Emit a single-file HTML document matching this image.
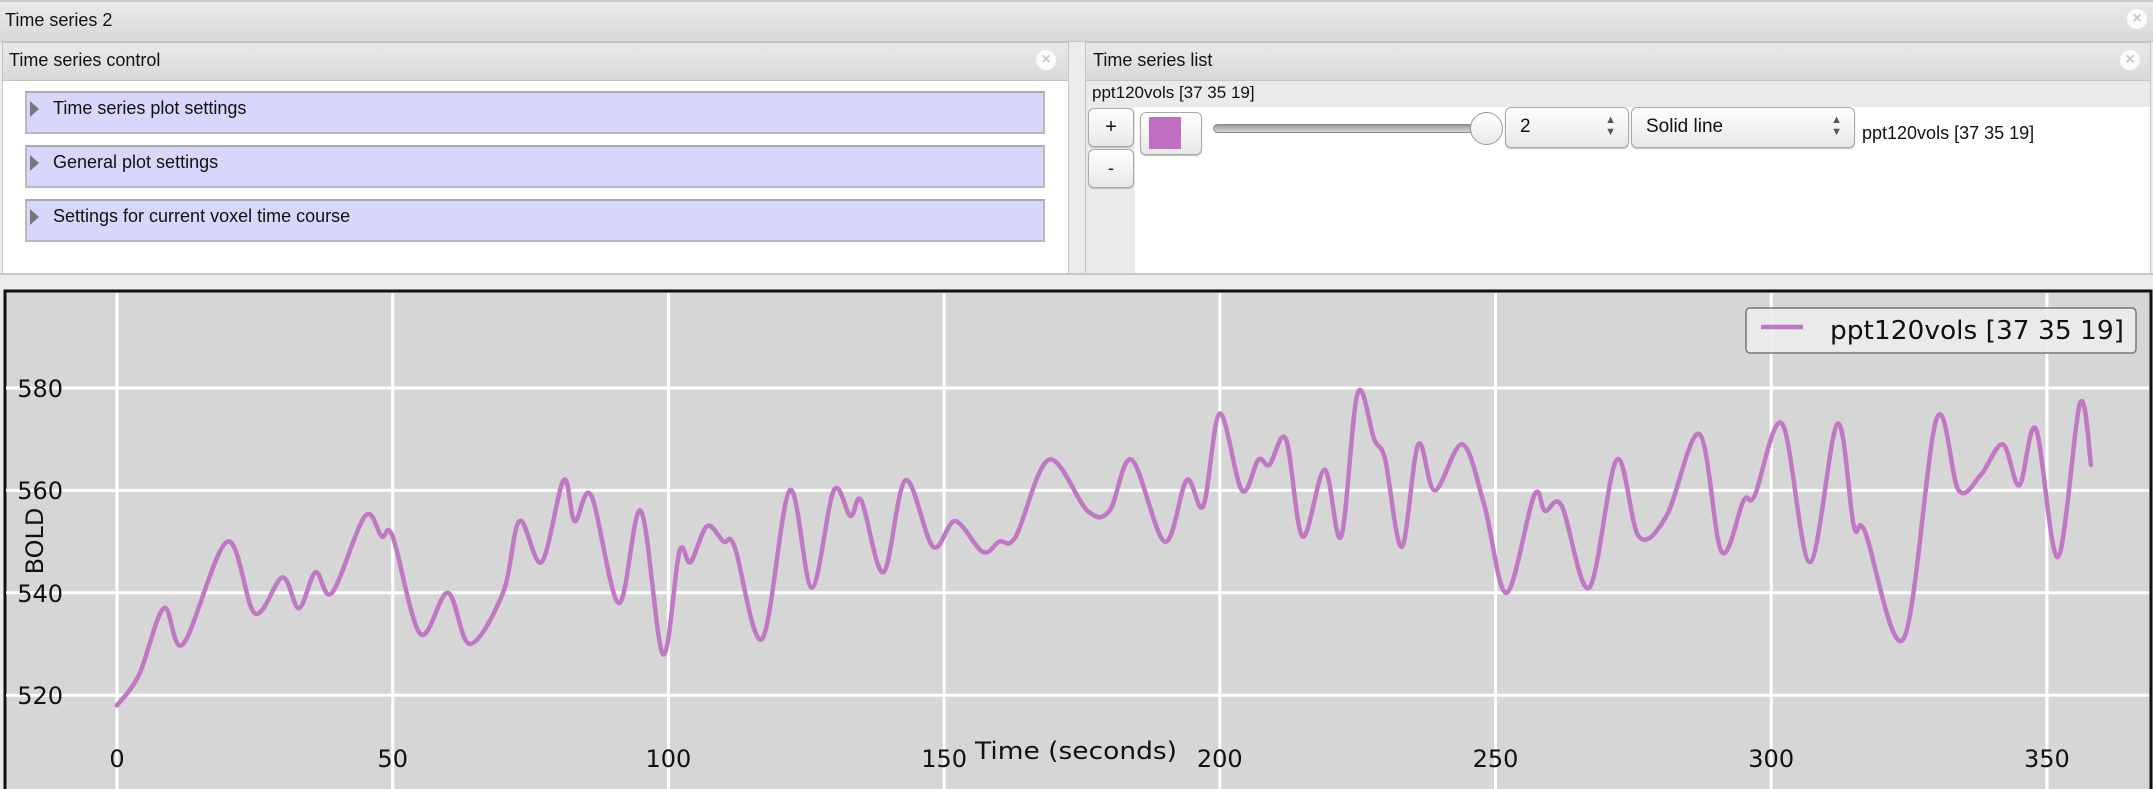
<!DOCTYPE html>
<html><head><meta charset="utf-8">
<style>
*{margin:0;padding:0;box-sizing:border-box}
body{width:2153px;height:789px;overflow:hidden;background:#ececec;font-family:"Liberation Sans",sans-serif;position:relative;color:#111}
.abs{position:absolute}
.bar{background:linear-gradient(#e9e9e9,#d9d9d9);border-bottom:1px solid #c4c4c4}
.t{font-size:18px;position:absolute}
.close{position:absolute;width:20px;height:20px;border-radius:50%;background:#fbfbfb;color:#c8c8c8;font-size:16px;line-height:20px;text-align:center;font-weight:bold}
.acc{position:absolute;left:25px;width:1020px;height:43px;background:#d7d7fb;border:2px solid #b9b9b9;border-top-color:#a9a9a9}
.acc span{position:absolute;left:26px;top:5px;font-size:18px}
.acc i{position:absolute;left:3px;top:8px;width:0;height:0;border-left:9px solid #777;border-top:8px solid transparent;border-bottom:8px solid transparent}
.btn{position:absolute;background:linear-gradient(#fefefe,#e8e8e8);border:1px solid #a8a8a8;border-radius:6px;box-shadow:0 1px 1px #bbb}
</style></head><body>
<div class="abs bar" style="left:0;top:0;width:2153px;height:42px;border-top:2px solid #c9c9c9"></div>
<div class="t" style="left:5px;top:10px">Time series 2</div>
<div class="close" style="left:2127px;top:9px">×</div>

<div class="abs" style="left:2px;top:42px;width:1067px;height:232px;background:#fff;border:1px solid #c4c4c4"></div>
<div class="abs bar" style="left:3px;top:43px;width:1065px;height:38px"></div>
<div class="t" style="left:9px;top:50px">Time series control</div>
<div class="close" style="left:1036px;top:50px">×</div>
<div class="acc" style="top:91px"><i></i><span>Time series plot settings</span></div>
<div class="acc" style="top:145px"><i></i><span>General plot settings</span></div>
<div class="acc" style="top:199px"><i></i><span>Settings for current voxel time course</span></div>

<div class="abs" style="left:1085px;top:42px;width:1066px;height:232px;background:#fff;border:1px solid #c4c4c4"></div>
<div class="abs bar" style="left:1086px;top:43px;width:1064px;height:38px"></div>
<div class="t" style="left:1093px;top:50px">Time series list</div>
<div class="close" style="left:2120px;top:50px">×</div>
<div class="abs" style="left:1086px;top:81px;width:1064px;height:26px;background:#ebebeb"></div>
<div class="t" style="left:1092px;top:83px;font-size:17px">ppt120vols [37 35 19]</div>
<div class="abs" style="left:1086px;top:107px;width:49px;height:166px;background:#ebebeb"></div>
<div class="btn" style="left:1088px;top:108px;width:46px;height:39px;text-align:center;font-size:20px;line-height:36px">+</div>
<div class="btn" style="left:1088px;top:149px;width:46px;height:39px;text-align:center;font-size:18px;line-height:36px">-</div>
<div class="btn" style="left:1140px;top:112px;width:62px;height:43px"><div class="abs" style="left:8px;top:4px;width:32px;height:32px;background:#c06fc0"></div></div>
<div class="abs" style="left:1213px;top:124px;width:275px;height:9px;border-radius:5px;background:linear-gradient(#999,#d8d8d8);border:1px solid #888"></div>
<div class="abs" style="left:1470px;top:112px;width:33px;height:33px;border-radius:50%;background:linear-gradient(#fff,#e8e8e8);border:1px solid #999"></div>
<div class="btn" style="left:1505px;top:107px;width:124px;height:41px"><span class="abs" style="left:14px;top:8px;font-size:19px">2</span><span class="abs" style="right:12px;top:6px;font-size:11px;line-height:12px;color:#555">▲<br>▼</span></div>
<div class="btn" style="left:1631px;top:107px;width:224px;height:41px"><span class="abs" style="left:14px;top:8px;font-size:19px">Solid line</span><span class="abs" style="right:12px;top:6px;font-size:11px;line-height:12px;color:#555">▲<br>▼</span></div>
<div class="t" style="left:1862px;top:123px;font-size:18px">ppt120vols [37 35 19]</div>

<div class="abs" style="left:0;top:273px;width:2153px;height:2px;background:#c8c8c8"></div>
<svg class="abs" style="left:0;top:0" width="2153" height="789">
<rect x="5" y="291" width="2146" height="500" fill="#d6d6d6" stroke="#111" stroke-width="3"/>
<g stroke="#fff" stroke-width="3">
<line x1="117" y1="293" x2="117" y2="789"/><line x1="392.7" y1="293" x2="392.7" y2="789"/><line x1="668.4" y1="293" x2="668.4" y2="789"/><line x1="944.1" y1="293" x2="944.1" y2="789"/><line x1="1219.8" y1="293" x2="1219.8" y2="789"/><line x1="1495.5" y1="293" x2="1495.5" y2="789"/><line x1="1771.2" y1="293" x2="1771.2" y2="789"/><line x1="2046.9" y1="293" x2="2046.9" y2="789"/>
<line x1="6" y1="388" x2="2149" y2="388"/><line x1="6" y1="490.4" x2="2149" y2="490.4"/><line x1="6" y1="592.8" x2="2149" y2="592.8"/><line x1="6" y1="695.2" x2="2149" y2="695.2"/>
</g>
<g font-family="DejaVu Sans,sans-serif" font-size="24" fill="#111">
<text x="63" y="397" text-anchor="end">580</text><text x="63" y="499" text-anchor="end">560</text><text x="63" y="602" text-anchor="end">540</text><text x="63" y="704" text-anchor="end">520</text>
<g text-anchor="middle"><text x="117" y="767">0</text><text x="392.7" y="767">50</text><text x="668.4" y="767">100</text><text x="944.1" y="767">150</text><text x="1219.8" y="767">200</text><text x="1495.5" y="767">250</text><text x="1771.2" y="767">300</text><text x="2046.9" y="767">350</text></g>
<text x="975" y="759" font-size="24" textLength="202" lengthAdjust="spacingAndGlyphs">Time (seconds)</text>
<text transform="translate(43,541) rotate(-90)" text-anchor="middle" font-size="24">BOLD</text>
</g>
<path id="ln" fill="none" stroke="#c077c4" stroke-width="4.5" stroke-linejoin="round" stroke-linecap="round"/>
<rect x="1746" y="308" width="390" height="45" rx="4" fill="#ececec" fill-opacity="0.9" stroke="#777" stroke-width="1.5"/>
<line x1="1761" y1="327" x2="1803" y2="327" stroke="#c077c4" stroke-width="4.5"/>
<text x="1830" y="339" font-family="DejaVu Sans,sans-serif" font-size="26" fill="#111" textLength="294" lengthAdjust="spacingAndGlyphs">ppt120vols [37 35 19]</text>
</svg>
<script>
var d=[[0,518],[4,524],[8.5,537],[12,530],[20,550],[25,536],[30,543],[33,537],[36,544],[39,540],[45,555],[48,551],[50,551],[55,532],[60,540],[64,530],[70,540],[73,554],[77,546],[81,562],[83,554],[86,559],[91,538],[95,556],[99,528],[102,548],[104,546],[107,553],[110,550],[112,549],[117,531],[122,560],[126,541],[130,560],[133,555],[135,558],[139,544],[143,562],[148,549],[152,554],[157,548],[160,550],[163,551],[169,566],[176,556],[180,556],[184,566],[190,550],[194,562],[197,557],[200,575],[204,560],[207,566],[209,565],[212,570],[215,551],[219,564],[222,551],[225,579],[228,570],[230,566],[233,549],[236,569],[239,560],[244,569],[248,557],[252,540],[257,559],[259,556],[262,557],[267,541],[272,566],[276,551],[281,555],[287,571],[291,548],[295,558],[297,559],[302,573],[307,546],[312,573],[315,553],[317,552],[324,531],[330,574],[334,560],[338,563],[342,569],[345,561],[348,572],[352,547],[356,577],[358,565]];
var p=d.map(function(a){return [117+a[0]*5.514,388+(580-a[1])*5.12]});
var s="M"+p[0][0].toFixed(1)+","+p[0][1].toFixed(1);
for(var i=0;i<p.length-1;i++){var p0=p[Math.max(i-1,0)],p1=p[i],p2=p[i+1],p3=p[Math.min(i+2,p.length-1)];
s+="C"+(p1[0]+(p2[0]-p0[0])/6).toFixed(1)+","+(p1[1]+(p2[1]-p0[1])/6).toFixed(1)+" "+(p2[0]-(p3[0]-p1[0])/6).toFixed(1)+","+(p2[1]-(p3[1]-p1[1])/6).toFixed(1)+" "+p2[0].toFixed(1)+","+p2[1].toFixed(1);}
document.getElementById("ln").setAttribute("d",s);
</script>
</body>
</html>
